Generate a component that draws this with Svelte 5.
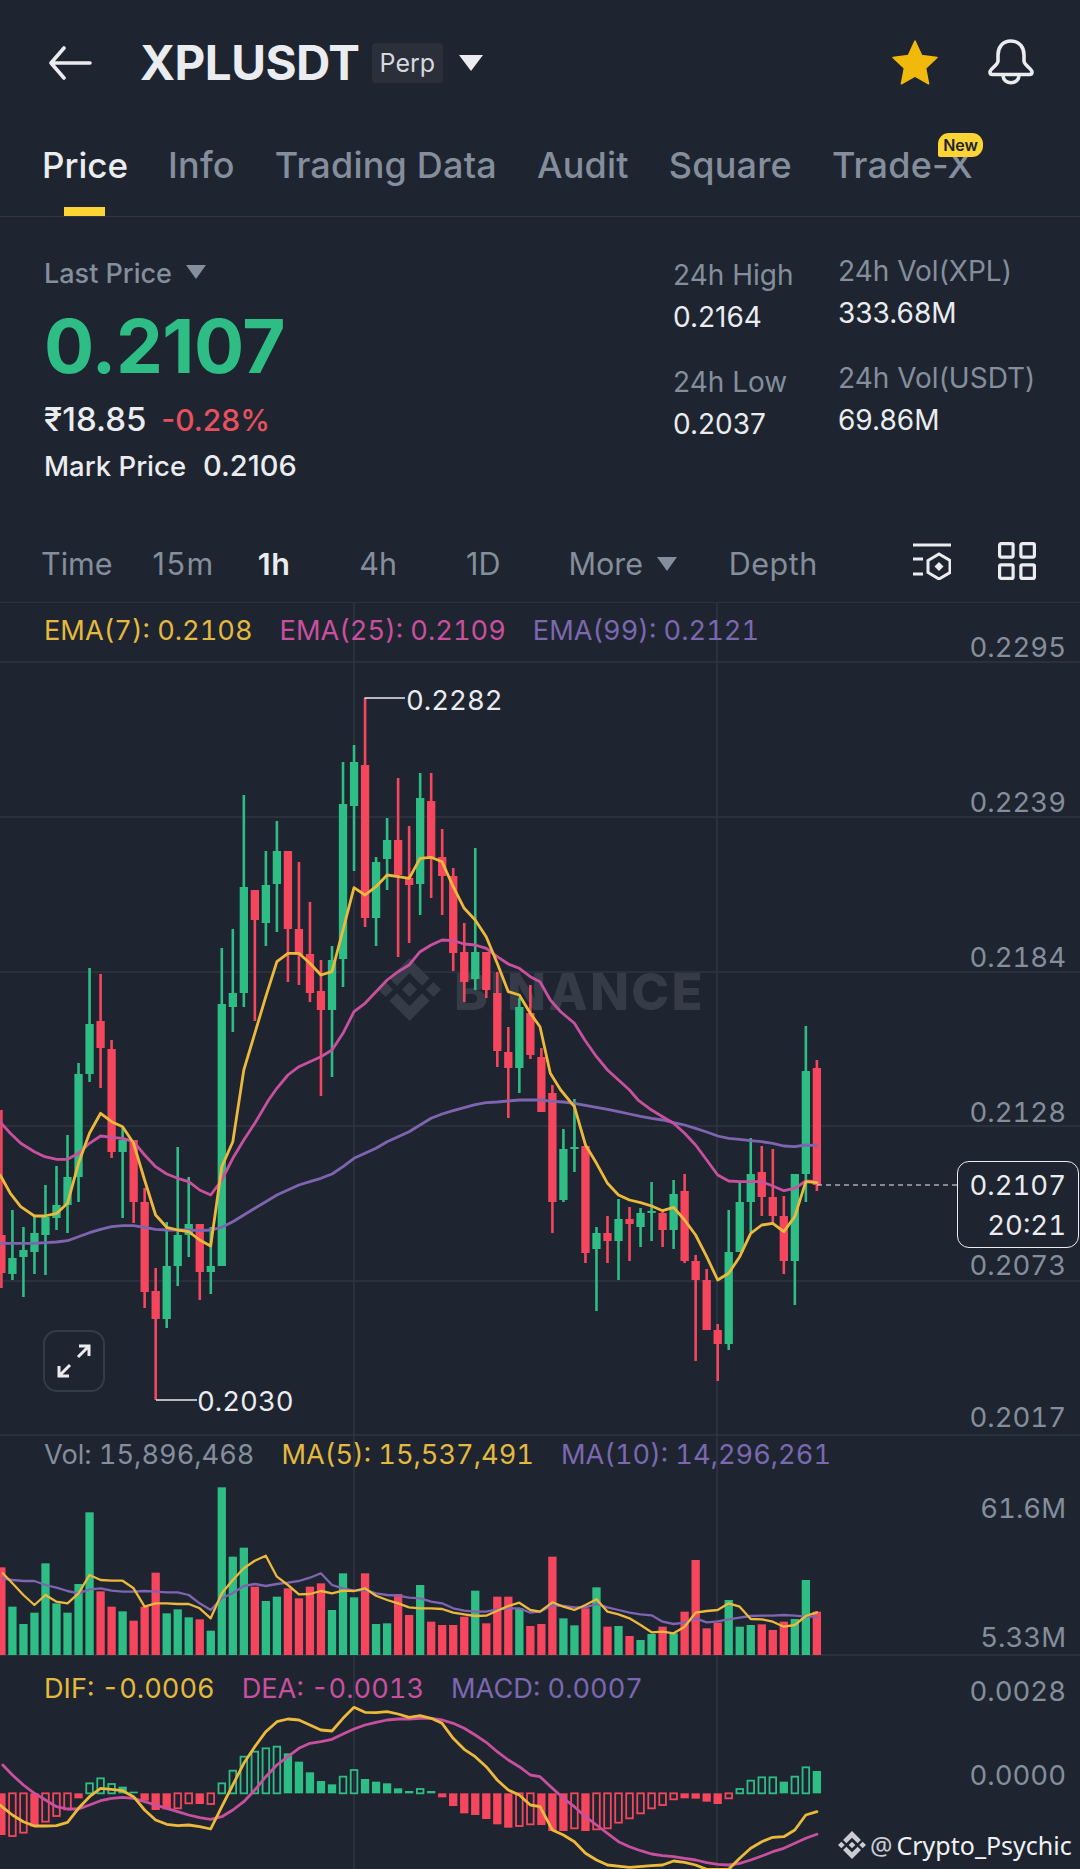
<script>
	const GREEN = '#2ebd85';
	const RED = '#f6465d';
	const STEP = 11.02;

	const tabs = ['Price', 'Info', 'Trading Data', 'Audit', 'Square', 'Trade-X'];
	const frames = [
		{ label: 'Time', cls: '' },
		{ label: '15m', cls: '' },
		{ label: '1h', cls: 'on' },
		{ label: '4h', cls: 'far' },
		{ label: '1D', cls: 'far' }
	];

	// wick top, body top, body bottom, wick bottom (page y), up?
	const candles = [
		[1110,1235,1273,1288,0],[1210,1258,1274,1280,1],[1227,1250,1257,1297,1],[1217,1233,1252,1274,1],[1185,1217,1235,1275,1],
		[1166,1205,1218,1230,1],[1135,1177,1205,1233,1],[1063,1074,1177,1202,1],[968,1024,1074,1082,1],[974,1021,1048,1088,0],
		[1040,1049,1152,1158,0],[1128,1140,1152,1218,1],[1140,1140,1202,1223,0],[1188,1202,1292,1308,0],[1268,1291,1319,1400,0],
		[1222,1266,1319,1328,1],[1147,1235,1266,1286,1],[1177,1224,1235,1257,1],[1224,1224,1272,1300,0],[1227,1266,1272,1294,1],
		[948,1004,1266,1266,1],[929,993,1007,1032,1],[795,887,993,1007,1],[890,890,920,1021,0],[851,885,923,946,1],
		[821,851,884,932,1],[851,851,929,982,0],[862,929,955,985,0],[902,954,993,1002,0],[960,991,1010,1096,0],
		[946,960,1010,1077,1],[762,804,959,987,1],[745,762,806,871,1],[698,765,918,927,0],[857,862,918,946,1],
		[818,840,859,890,1],[778,840,875,957,0],[826,878,885,943,0],[773,798,884,915,1],[773,801,857,898,0],
		[829,857,876,915,0],[868,876,953,971,0],[923,952,982,1002,0],[848,952,979,990,1],[952,952,990,998,0],
		[972,993,1051,1067,0],[1027,1052,1068,1118,0],[998,1007,1068,1093,1],[985,1013,1055,1059,0],[1048,1057,1112,1112,0],
		[1085,1093,1202,1233,0],[1129,1149,1200,1202,1],[1099,1147,1149,1172,1],[1146,1146,1253,1263,0],[1227,1233,1249,1311,1],
		[1216,1233,1241,1263,0],[1199,1219,1241,1280,1],[1207,1219,1224,1261,0],[1208,1213,1227,1247,1],[1182,1211,1213,1241,1],
		[1212,1213,1230,1247,0],[1180,1194,1230,1249,1],[1174,1191,1261,1263,0],[1255,1261,1280,1361,0],[1269,1280,1330,1330,0],
		[1324,1330,1344,1381,0],[1210,1252,1344,1350,1],[1183,1202,1252,1252,1],[1138,1174,1202,1232,1],[1146,1172,1197,1216,0],
		[1149,1197,1216,1223,0],[1196,1216,1261,1274,0],[1174,1174,1261,1305,1],[1026,1071,1174,1202,1],[1060,1068,1185,1191,0]
	];

	const candleX = (i) => 1.4 + STEP * i;

	// volume bar tops (page y = 1430 + v / 3)
	const volume = [412,530,582,548,400,520,548,462,247,484,530,544,572,530,428,550,538,562,568,602,172,380,353,470,513,500,475,505,470,460,540,430,502,430,582,580,492,555,465,575,585,585,560,482,580,500,500,535,588,582,380,565,586,535,472,590,588,618,630,612,590,610,545,390,595,578,510,590,585,583,600,575,567,450,545];

	// macd bar ends, same units as volume; 1090 is the zero line
	const macd = [1215,1218,1208,1190,1175,1158,1138,1105,1060,1045,1062,1070,1085,1112,1140,1138,1135,1120,1122,1122,1060,1022,980,965,955,950,970,995,1027,1053,1063,1040,1020,1047,1055,1060,1075,1083,1077,1083,1102,1128,1150,1155,1167,1183,1193,1188,1183,1185,1203,1203,1195,1203,1198,1195,1178,1165,1150,1135,1125,1108,1105,1106,1115,1122,1105,1077,1052,1042,1042,1055,1040,1012,1023];
	const hollow = new Set([1,2,4,5,6,8,9,10,16,17,19,20,21,22,23,24,25,31,32,38,47,48,52,54,55,56,57,58,59,60,61,66,67,68,69,70,72,73]);

	// lines are traced as [x, y] pairs; x is on a 2.904 scale, y on a 3x scale
	function trace(parts) {
		return parts
			.map(([xo, yo, pts]) => pts.map(([x, y]) => `${(xo + x / 2.904).toFixed(1)},${(yo + y / 3).toFixed(1)}`).join(' '))
			.join(' ');
	}

	const ema7 = trace([
		[0, 1100, [[0,225],[4,232],[30,280],[60,320],[100,348],[130,348],[165,340],[196,310],[228,190],[260,100],[292,40],[324,65],[356,80],[388,130],[420,240],[452,345],[484,382],[516,390],[548,395],[580,420],[612,438],[644,200],[676,125]]],
		[0, 660, [[708,1230],[740,1120],[772,1010],[804,905],[836,880],[868,880],[900,910],[932,945],[964,935],[996,810],[1028,683],[1060,705],[1092,680],[1124,645],[1156,650],[1188,655],[1220,595],[1252,592],[1284,605],[1316,680],[1348,745],[1380,780],[1412,830],[1444,910],[1476,995],[1508,1005],[1540,1060]]],
		[540, 660, [[0,1100],[30,1240],[60,1290]]],
		[540, 1100, [[100,20],[132,135],[164,190],[196,250],[228,285],[260,300],[292,308],[324,318],[356,332],[388,322],[420,360],[452,405],[484,470],[516,540],[548,520],[580,470],[612,400],[644,375],[676,370],[708,395],[740,350],[772,245],[804,248]]]
	]);
	const ema25 = trace([
		[0, 1100, [[0,65],[4,70],[30,100],[60,130],[100,155],[130,170],[165,178],[196,178],[228,160],[260,130],[292,108],[324,112],[356,115],[388,125],[420,165],[452,200],[484,222],[516,235],[548,245],[580,270],[612,285],[644,240],[676,175],[708,120],[740,70]]],
		[0, 660, [[780,1320],[804,1285],[836,1245],[868,1220],[900,1205],[932,1190],[964,1170],[996,1120],[1028,1055],[1060,1030],[1092,995],[1124,960],[1156,935],[1188,915],[1220,875],[1252,855],[1284,840],[1316,842],[1348,852],[1380,855],[1412,865],[1444,890],[1476,912],[1508,925],[1540,950]]],
		[540, 660, [[0,965],[30,1020],[60,1055],[100,1090],[130,1140],[164,1190],[196,1230],[228,1260],[260,1290]]],
		[540, 1100, [[285,0],[324,30],[356,50],[388,70],[420,100],[452,135],[484,180],[516,225],[548,243],[580,245],[612,245],[644,245],[676,258],[708,272],[740,265],[772,243],[804,245]]]
	]);
	const ema99 = trace([
		[0, 1100, [[0,430],[36,430],[68,430],[100,430],[132,428],[164,426],[196,422],[228,410],[260,398],[292,388],[324,380],[356,377],[388,377],[420,382],[452,388],[484,390],[516,390],[548,390],[580,392],[612,390],[644,382],[676,365],[708,345],[740,325],[772,305],[804,285],[836,270],[868,255],[900,245],[932,235],[964,222],[996,200],[1028,175],[1060,160],[1092,145],[1124,125],[1156,110],[1188,95],[1220,75],[1252,55],[1284,42],[1316,32],[1348,23],[1380,14],[1412,8],[1444,6],[1476,3],[1508,0]]],
		[540, 1100, [[0,0],[36,4],[68,6],[100,10],[132,16],[164,22],[196,28],[228,35],[260,42],[292,49],[324,55],[356,60],[388,68],[420,75],[452,85],[484,96],[516,108],[548,115],[580,118],[612,122],[644,125],[676,130],[708,138],[740,140],[772,135],[804,137]]]
	]);
	const volMa5 = trace([
		[0, 1430, [[8,430],[36,460],[68,495],[100,525],[132,495],[164,515],[196,520],[228,490],[260,435],[292,450],[324,452],[356,452],[388,475],[420,530],[452,520],[484,520],[516,522],[548,522],[580,535],[612,565],[644,490],[676,450],[708,415],[740,392],[772,377],[804,440],[836,465],[868,493],[900,492],[932,483],[964,490],[996,482],[1028,483],[1060,475],[1092,497],[1124,510],[1156,520],[1188,532],[1220,535],[1252,535],[1284,537],[1316,548],[1348,553],[1380,558],[1412,557],[1444,542],[1476,528],[1508,518],[1540,540]]],
		[540, 1430, [[0,545],[36,517],[68,530],[100,540],[132,525],[164,508],[196,545],[228,553],[260,565],[292,585],[324,607],[356,605],[388,610],[420,590],[452,548],[484,543],[516,540],[548,520],[580,530],[612,567],[644,568],[676,575],[708,590],[740,585],[772,558],[804,547]]]
	]);
	const volMa10 = trace([
		[0, 1430, [[8,445],[36,450],[68,453],[100,453],[132,465],[164,473],[196,483],[228,490],[260,478],[292,475],[324,482],[356,485],[388,485],[420,483],[452,485],[484,487],[516,487],[548,495],[580,520],[612,540],[644,505],[676,490],[708,468],[740,462],[772,468],[804,462],[836,458],[868,453],[900,443],[932,430],[964,465],[996,475],[1028,482],[1060,480],[1092,490],[1124,495],[1156,497],[1188,503],[1220,505],[1252,515],[1284,520],[1316,535],[1348,542],[1380,545],[1412,545],[1444,538],[1476,535],[1508,535],[1540,548]]],
		[540, 1430, [[0,545],[36,525],[68,528],[100,532],[132,532],[164,522],[196,532],[228,540],[260,548],[292,553],[324,556],[356,575],[388,582],[420,578],[452,565],[484,577],[516,574],[548,568],[580,563],[612,558],[644,557],[676,557],[708,555],[740,557],[772,560],[804,560]]]
	]);
	const dif = trace([
		[0, 1430, [[0,1125],[8,1132],[36,1155],[68,1175],[100,1188],[132,1188],[164,1187],[196,1177],[228,1135],[260,1100],[292,1075],[324,1078],[356,1082],[388,1100],[420,1140],[452,1170],[484,1183],[516,1187],[548,1185],[580,1190],[612,1197],[644,1130],[676,1065],[708,1000],[740,950],[772,905],[804,875],[836,867],[868,870],[900,885],[932,900],[964,903],[996,865],[1028,832],[1060,847],[1092,848],[1124,845],[1156,852],[1188,862],[1220,857],[1252,865],[1284,880],[1316,925],[1348,958],[1380,980],[1412,1010],[1444,1050],[1476,1080],[1508,1095],[1540,1125]]],
		[540, 1430, [[0,1130],[36,1200],[68,1215],[100,1235],[132,1270],[164,1290],[196,1305],[260,1312],[324,1307],[356,1305],[388,1293],[420,1297],[452,1305],[484,1318],[548,1318],[580,1285],[612,1255],[644,1235],[676,1222],[708,1220],[740,1200],[772,1155],[804,1145]]]
	]);
	const dea = trace([
		[0, 1430, [[8,1005],[36,1035],[68,1065],[100,1090],[132,1110],[164,1130],[196,1137],[228,1137],[260,1125],[292,1112],[324,1105],[356,1102],[388,1105],[420,1115],[452,1125],[484,1135],[516,1145],[548,1155],[580,1163],[612,1168],[644,1160],[676,1140],[708,1115],[740,1080],[772,1040],[804,1005],[836,980],[868,955],[900,940],[932,935],[964,928],[996,912],[1028,897],[1060,885],[1092,877],[1124,870],[1156,867],[1188,867],[1220,865],[1252,865],[1284,870],[1316,880],[1348,895],[1380,915],[1412,937],[1444,965],[1476,990],[1508,1010],[1540,1035]]],
		[540, 1430, [[0,1040],[36,1075],[68,1105],[100,1130],[132,1160],[164,1185],[196,1210],[228,1235],[260,1250],[292,1262],[324,1272],[356,1277],[388,1280],[420,1285],[452,1290],[484,1298],[516,1303],[548,1305],[580,1300],[612,1290],[644,1278],[676,1265],[708,1255],[740,1240],[772,1225],[804,1213]]]
	]);

	const gridH = [662, 817, 972, 1126, 1281, 1435, 1655];
	const gridV = [354, 717];
	const axis = [
		['0.2295', 647], ['0.2239', 802], ['0.2184', 957], ['0.2128', 1112], ['0.2073', 1265], ['0.2017', 1417],
		['61.6M', 1508], ['5.33M', 1637], ['0.0028', 1691], ['0.0000', 1775]
	];

	const logoParts = [
		'M50 0L82 32L70 44L50 24L30 44L18 32Z',
		'M50 100L82 68L70 56L50 76L30 56L18 68Z',
		'M0 50L12 38L24 50L12 62Z',
		'M100 50L88 38L76 50L88 62Z',
		'M50 38L62 50L50 62L38 50Z'
	];
</script>

<div class="page">
	<header class="top">
		<svg class="back" width="44" height="34" viewBox="0 0 44 34" fill="none" stroke="#eaecef" stroke-width="3.6" stroke-linecap="round" stroke-linejoin="round">
			<path d="M42 17H3M16 2L3 17l13 15" />
		</svg>
		<span class="pair">XPLUSDT</span>
		<span class="chip">Perp</span>
		<span class="caret white"></span>
		<svg class="star" width="48" height="48" viewBox="0 0 48 48">
			<path d="M24 2l6.6 14.4 15.4 2-11.4 10.7 3 15.7L24 37.1 10.4 44.8l3-15.7L2 18.4l15.4-2z" fill="#f0b90b" stroke="#f0b90b" stroke-width="1.5" stroke-linejoin="round" />
		</svg>
		<svg class="bell" width="46" height="48" viewBox="0 0 46 48" fill="none" stroke="#eaecef" stroke-width="3.6" stroke-linejoin="round">
			<path d="M23 2C14 2 10 9 10 16v6c0 4-8 8-8 11 0 1.500 1 2.500 2.500 2.500h37c1.500 0 2.500-1 2.500-2.500 0-3-8-7-8-11v-6C36 9 32 2 23 2z" />
			<path d="M15 37c1 9 15 9 16 0" />
		</svg>
	</header>

	<nav class="tabs">
		{#each tabs as tab, i}
			<span class="tab" class:active={i === 0}>
				{tab}
				{#if tab === 'Trade-X'}<em class="new">New</em>{/if}
			</span>
		{/each}
	</nav>

	<section class="stats">
		<div class="last">
			<div class="last-label">Last Price <span class="caret grey"></span></div>
			<div class="last-price">0.2107</div>
			<div class="fiat"><span class="inr">₹18.85</span><span class="down">-0.28%</span></div>
			<div class="mark"><span>Mark Price</span><span class="mark-val">0.2106</span></div>
		</div>
		<dl class="col col-a">
			<dt>24h High</dt><dd>0.2164</dd>
			<dt>24h Low</dt><dd>0.2037</dd>
		</dl>
		<dl class="col col-b">
			<dt>24h Vol(XPL)</dt><dd>333.68M</dd>
			<dt>24h Vol(USDT)</dt><dd>69.86M</dd>
		</dl>
	</section>

	<div class="frames">
		{#each frames as f}
			<span class="frame {f.cls}">{f.label}</span>
		{/each}
		<span class="frame more">More <span class="caret grey"></span></span>
		<span class="frame depth">Depth</span>
		<svg class="tool" width="38" height="38" viewBox="0 0 38 38" fill="none" stroke="#eaecef" stroke-width="3">
			<path d="M0 3h38M0 17h10M0 32h10" />
			<path d="M26 12l11 6.500v12L26 37l-11-6.500v-12z" />
			<path d="M26 20l4.500 4.500L26 29l-4.500-4.500z" fill="#eaecef" stroke="none" />
		</svg>
		<svg class="tool grid-icon" width="38" height="38" viewBox="0 0 38 38" fill="none" stroke="#eaecef" stroke-width="3.2">
			<rect x="1.600" y="1.600" width="13.500" height="13.500" rx="1.500" />
			<rect x="22.900" y="1.600" width="13.500" height="13.500" rx="1.500" />
			<rect x="1.600" y="22.900" width="13.500" height="13.500" rx="1.500" />
			<rect x="22.900" y="22.900" width="13.500" height="13.500" rx="1.500" />
		</svg>
	</div>

	<section class="chart">
		<!-- everything in the svg uses page coordinates, chart starts at y=603 -->
		<svg class="plot" width="1080" height="1266" viewBox="0 603 1080 1266">
			{#each gridH as y}<line x1="0" x2="1080" y1={y} y2={y} class="gridline" />{/each}
			{#each gridV as x}<line x1={x} x2={x} y1="603" y2="1869" class="gridline" />{/each}

			<g fill="#363c47" transform="translate(378 958) scale(0.63)">
				{#each logoParts as d}<path {d} />{/each}
			</g>
			<text x="454" y="1010" class="mark-text">BINANCE</text>

			{#each candles as [wt, bt, bb, wb, up], i}
				<rect x={candleX(i) - 1.300} y={wt} width="2.600" height={wb - wt} fill={up ? GREEN : RED} />
				<rect x={candleX(i) - 4.150} y={bt} width="8.300" height={bb - bt} fill={up ? GREEN : RED} />
			{/each}
			<polyline points={ema99} class="line" stroke="#7f64b0" />
			<polyline points={ema25} class="line" stroke="#c9509f" />
			<polyline points={ema7} class="line" stroke="#ecb93c" />

			<path d="M364.500 698H405" stroke="#eaecef" stroke-width="1.500" fill="none" />
			<text x="406" y="709.500" class="tick bright">0.2282</text>
			<path d="M156 1400H197" stroke="#eaecef" stroke-width="1.500" fill="none" />
			<text x="197" y="1410.500" class="tick bright">0.2030</text>

			{#each volume as top, i}
				<rect x={candleX(i) - 4.150} y={1430 + top / 3} width="8.300" height={225 - top / 3} fill={candles[i][4] ? GREEN : RED} />
			{/each}
			<polyline points={volMa10} class="line thin" stroke="#7f64b0" />
			<polyline points={volMa5} class="line thin" stroke="#ecb93c" />

			{#each macd as end, i}
				{@const a = Math.min(end, 1090)}
				{@const h = Math.abs(end - 1090) / 3}
				{@const c = end < 1090 ? GREEN : RED}
				{#if hollow.has(i)}
					<rect x={candleX(i) - 3.300} y={1430 + a / 3} width="6.600" height={h} fill="none" stroke={c} stroke-width="1.800" />
				{:else}
					<rect x={candleX(i) - 4.150} y={1430 + a / 3} width="8.300" height={h} fill={c} />
				{/if}
			{/each}
			<polyline points={dea} class="line" stroke="#c9509f" />
			<polyline points={dif} class="line" stroke="#ecb93c" />

			{#each axis as [label, y]}
				<text x="1066" y={y + 10} class="tick" text-anchor="end">{label}</text>
			{/each}

			<line x1="817" x2="957" y1="1185" y2="1185" stroke="#eaecef" stroke-width="1.200" stroke-dasharray="5 4" />
		</svg>

		<div class="legend ema">
			<span class="yellow">EMA(7): 0.2108</span>
			<span class="pink">EMA(25): 0.2109</span>
			<span class="purple">EMA(99): 0.2121</span>
		</div>
		<div class="legend vol">
			<span class="grey-text">Vol: 15,896,468</span>
			<span class="yellow">MA(5): 15,537,491</span>
			<span class="purple">MA(10): 14,296,261</span>
		</div>
		<div class="legend mac">
			<span class="yellow">DIF: -0.0006</span>
			<span class="pink">DEA: -0.0013</span>
			<span class="purple">MACD: 0.0007</span>
		</div>

		<div class="now">
			<span>0.2107</span>
			<span>20:21</span>
		</div>

		<button class="expand" aria-label="Expand">
			<svg width="34" height="34" viewBox="0 0 34 34" fill="none" stroke="#eaecef" stroke-width="3">
				<path d="M21 13L32 2M22 2h10v10M13 21L2 32M12 32H2V22" />
			</svg>
		</button>

		<div class="stamp">
			<svg width="28" height="28" viewBox="0 0 100 100" fill="#c9ccd2">
				{#each logoParts as d}<path {d} />{/each}
			</svg>
			<span class="at">@</span>
			<span class="handle">Crypto_Psychic</span>
		</div>
	</section>
</div>

<style>
	:global(body) {
		margin: 0;
		background: #1e2530;
	}

	.page {
		width: 1080px;
		height: 1869px;
		overflow: hidden;
		background: #1e2530;
		color: #eaecef;
		font-family: Inter, 'Noto Sans', sans-serif;
		display: flex;
		flex-direction: column;
	}

	.top {
		height: 122px;
		box-sizing: border-box;
		padding: 3px 46px 0 48px;
		display: flex;
		align-items: center;
	}

	.pair {
		margin-left: 48px;
		font-size: 47.500px;
		font-weight: 700;
		letter-spacing: -0.5px;
	}

	.chip {
		margin-left: 12px;
		padding: 0 8px;
		height: 40px;
		line-height: 40px;
		background: #2a2f3a;
		border-radius: 4px;
		font-size: 25px;
		color: #d5d8de;
	}

	.caret {
		display: inline-block;
		width: 0;
		height: 0;
		border-style: solid;
		border-color: transparent;
		border-left-width: 10px;
		border-right-width: 10px;
		border-top-width: 14px;
		border-bottom-width: 0;
	}

	.caret.white {
		margin-left: 16px;
		border-left-width: 12px;
		border-right-width: 12px;
		border-top: 16px solid #eaecef;
	}

	.caret.grey {
		border-top-color: #848e9c;
		vertical-align: 4px;
	}

	.star {
		margin-left: auto;
		position: relative;
		left: 1px;
	}

	.bell {
		margin-left: 50px;
	}

	.tabs {
		height: 95px;
		box-sizing: border-box;
		padding: 0 0 0 42px;
		display: flex;
		gap: 40px;
		border-bottom: 1.500px solid #31363f;
	}

	.tab {
		position: relative;
		padding-top: 21px;
		font-size: 36px;
		font-weight: 500;
		letter-spacing: 0.2px;
		color: #848e9c;
		white-space: nowrap;
	}

	.tab.active {
		color: #eaecef;
		font-size: 35px;
		letter-spacing: 0;
		padding-top: 22px;
	}

	.tab.active::after {
		content: '';
		position: absolute;
		left: 22px;
		bottom: 0;
		width: 41px;
		height: 9px;
		background: #fcd535;
	}

	.new {
		position: absolute;
		right: -10px;
		top: 11px;
		padding: 0 5px;
		height: 24px;
		line-height: 24px;
		border-radius: 11px 11px 11px 2px;
		background: #fcd535;
		color: #1e2329;
		font-size: 16px;
		font-style: normal;
		font-weight: 600;
		letter-spacing: 0;
	}

	.stats {
		height: 303px;
		box-sizing: border-box;
		padding: 41px 0 0 44px;
		display: grid;
		grid-template-columns: 629px 165px 1fr;
	}

	.last-label {
		font-size: 27px;
		font-weight: 500;
		line-height: 32px;
		color: #848e9c;
	}

	.last-label .caret {
		margin-left: 7px;
	}

	.last-price {
		margin-top: 13px;
		font-size: 74.500px;
		font-weight: 700;
		line-height: 86px;
		letter-spacing: -0.5px;
		color: #2ebd85;
	}

	.fiat {
		margin-top: 12px;
		display: flex;
		align-items: baseline;
		gap: 15px;
		font-size: 30px;
		font-weight: 500;
		line-height: 36px;
	}

	.inr {
		font-size: 33px;
	}

	.down {
		color: #e8505f;
	}

	.mark {
		margin-top: 10px;
		display: flex;
		align-items: baseline;
		gap: 17px;
		font-size: 27.500px;
		font-weight: 500;
		line-height: 36px;
	}

	.mark-val {
		font-size: 29px;
	}

	dl {
		margin: 0;
		font-size: 28px;
		line-height: 36px;
	}

	dt {
		color: #848e9c;
	}

	dd {
		margin: 6px 0 29px;
		font-weight: 400;
		color: #eaecef;
	}

	.col-a {
		margin-top: -1px;
	}

	.col-b {
		margin-top: -5px;
	}

	.frames {
		height: 83px;
		box-sizing: border-box;
		padding: 4px 0 0 41px;
		display: flex;
		align-items: center;
		gap: 40px;
		border-bottom: 1.500px solid #2b313b;
		font-size: 30.500px;
		color: #848e9c;
	}

	.frame:nth-child(2) {
		letter-spacing: 1.500px;
	}

	.frame.on {
		color: #eaecef;
		font-weight: 600;
		margin-left: 3px;
		letter-spacing: 0.5px;
	}

	.frame.far {
		margin-left: 29px;
	}

	.frame.more {
		margin-left: 28px;
	}

	.more .caret {
		margin-left: 5px;
	}

	.frame.depth {
		margin-left: 12px;
		letter-spacing: 0.5px;
	}

	.tool {
		margin-left: auto;
		margin-top: -4px;
	}

	.grid-icon {
		margin-left: 0;
		margin-right: 44px;
	}

	.tool:not(.grid-icon) {
		margin-right: 7px;
	}

	.chart {
		position: relative;
		flex: 1;
	}

	.plot {
		position: absolute;
		inset: 0;
	}

	.gridline {
		stroke: #2f3540;
		stroke-width: 1.500;
	}

	.line {
		fill: none;
		stroke-width: 2.800;
		stroke-linejoin: round;
		stroke-linecap: round;
	}

	.line.thin {
		stroke-width: 2.300;
	}

	.tick {
		font-size: 27.500px;
		fill: #848e9c;
		font-variant-numeric: tabular-nums;
	}

	.tick.bright {
		fill: #eaecef;
	}

	.mark-text {
		font-size: 51px;
		font-weight: 800;
		letter-spacing: 2.300px;
		fill: #363c47;
	}

	.legend {
		position: relative;
		padding-left: 44px;
		display: flex;
		gap: 27px;
		font-size: 27.200px;
		line-height: 32px;
		white-space: nowrap;
		font-variant-numeric: tabular-nums;
	}

	.legend.ema {
		padding-top: 12px;
	}

	.legend.vol {
		margin-top: 792px;
	}

	.legend.mac {
		margin-top: 202px;
	}

	.yellow {
		color: #e4b93f;
	}

	.pink {
		color: #c9509f;
	}

	.purple {
		color: #7b68b0;
	}

	.grey-text {
		color: #848e9c;
	}

	.now {
		position: absolute;
		left: 957px;
		top: 558px;
		width: 122px;
		height: 87px;
		box-sizing: border-box;
		padding-right: 12px;
		border: 1.500px solid #eaecef;
		border-radius: 12px;
		background: #1e2530;
		display: flex;
		flex-direction: column;
		align-items: flex-end;
		justify-content: center;
		gap: 8px;
		font-size: 27.500px;
		line-height: 32px;
		font-variant-numeric: tabular-nums;
	}

	.expand {
		position: absolute;
		left: 43px;
		top: 727px;
		width: 62px;
		height: 62px;
		padding: 0;
		box-sizing: border-box;
		background: transparent;
		border: 2px solid #363c47;
		border-radius: 14px;
		display: flex;
		align-items: center;
		justify-content: center;
	}

	.stamp {
		position: absolute;
		left: 838px;
		top: 1228px;
		display: flex;
		align-items: center;
		gap: 4px;
		font-family: 'Noto Sans', sans-serif;
		font-size: 25px;
		line-height: 28px;
		white-space: nowrap;
	}

	.at {
		color: #c9ccd2;
	}

	.handle {
		color: #f0f1f3;
	}
</style>
